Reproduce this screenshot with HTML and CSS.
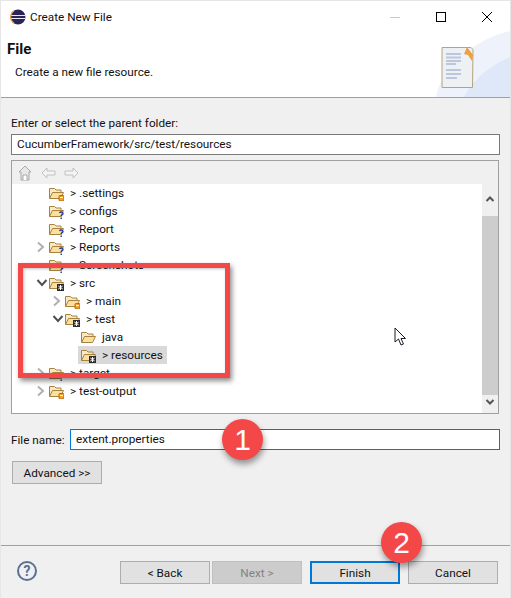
FILE: index.html
```html
<!DOCTYPE html>
<html lang="en">
<head>
  <meta charset="UTF-8" />
  <title>Create New File</title>
  <link rel="stylesheet" href="styles.css">
</head>
<body>

  <!-- icon set -->
  <svg class="defs" width="0" height="0">
    <symbol id="folder" viewBox="0 0 16 16">
      <path d="M1.500 13.500V3.500h5l1.500 1.500h5v2.500" fill="#f8e8c4" stroke="#a8833f"/>
      <path d="M1.500 13.500L4.500 7.500H15.500L12.500 13.500Z" fill="#fbdf9f" stroke="#a8833f"/>
    </symbol>
    <symbol id="mark-lock" viewBox="0 0 16 16">
      <rect x="11" y="10.500" width="5" height="5.500" rx="1" fill="#f0a030" stroke="#b06a10"/>
      <path d="M12 12.500h3" stroke="#fff"/>
    </symbol>
    <symbol id="mark-help" viewBox="0 0 16 16">
      <path d="M11.500 10c.8-1.500 3.500-1.200 3.500.4 0 1.400-1.800 1.400-1.800 3M13.200 14.500v1.500" fill="none" stroke="#2a3a9a" stroke-width="1.400"/>
    </symbol>
    <symbol id="mark-pkg" viewBox="0 0 16 16">
      <rect x="9" y="9" width="7" height="7" fill="#2b2b2b"/>
      <path d="M12.500 10v5M10.300 11l4.400 3M14.700 11l-4.400 3" stroke="#fff"/>
    </symbol>
    <symbol id="chev-right" viewBox="0 0 10 12">
      <path d="M2 1.500L7 6L2 10.500" fill="none" stroke="#b0b0b0" stroke-width="2"/>
    </symbol>
    <symbol id="chev-down" viewBox="0 0 12 10">
      <path d="M1.500 2L6 7L10.500 2" fill="none" stroke="#505050" stroke-width="2"/>
    </symbol>
  </svg>

  <div class="dialog">

    <!-- title bar -->
    <div class="titlebar">
      <svg class="app-icon" width="16" height="16" viewBox="0 0 16 16">
        <circle cx="8" cy="8" r="7.500" fill="#2c2456"/>
        <path d="M1 6.500h14M.8 9.500h14.400" stroke="#e8e8f0" stroke-width="1.200"/>
        <path d="M4 1.800A7.500 7.500 0 0 0 4 14.200" fill="none" stroke="#f09a30" stroke-width="1.200"/>
      </svg>
      <span class="title-text">Create New File</span>
      <div class="win-btns">
        <span class="win-btn"><svg width="12" height="12" viewBox="0 0 12 12"><path d="M1 6.500h10" stroke="#c8c8c8"/></svg></span>
        <span class="win-btn"><svg width="12" height="12" viewBox="0 0 12 12"><rect x="1.500" y="1.500" width="9" height="9" fill="none" stroke="#000"/></svg></span>
        <span class="win-btn"><svg width="12" height="12" viewBox="0 0 12 12"><path d="M1 1l10 10M11 1L1 11" stroke="#000"/></svg></span>
      </div>
    </div>

    <!-- banner -->
    <div class="banner">
      <div class="banner-text">
        <div class="banner-title">File</div>
        <div class="banner-desc">Create a new file resource.</div>
      </div>
      <svg class="banner-art" width="76" height="66" viewBox="0 0 76 66">
        <path d="M2 66C8 34 42 8 76 0V66Z" fill="#eef2fb"/>
        <path d="M30 66C40 46 58 34 76 26V66Z" fill="#dfe8f9"/>
        <path d="M8 16.500H37L39 18.500L38.500 56.500H8Z" fill="#edf1f4" stroke="#b5a47e"/>
        <path d="M33 16L39 24L38 30L34 24L30 23Z" fill="#ee9f3e"/>
        <path d="M12 23h15M12 26.500h15M12 30h15M12 33h10M12 39h15M12 43h15M12 47h11" stroke="#bcc7dd" stroke-width="2"/>
      </svg>
    </div>

    <div class="main">
      <div class="label">Enter or select the parent folder:</div>
      <div class="field">CucumberFramework/src/test/resources</div>

      <!-- tree -->
      <div class="tree-box">
        <div class="tree-tools">
          <svg width="14" height="16" viewBox="0 0 14 16">
            <path d="M7 1L1 7h2v8h8V7h2Z" fill="#e8e8e8" stroke="#a8a8a8"/>
            <path d="M5 15v-5h4v5" fill="#fff" stroke="#a8a8a8"/>
          </svg>
          <svg class="tool-back" width="15" height="12" viewBox="0 0 15 12">
            <path d="M1 6l5-5v3h8v4H6v3Z" fill="#f4f4f4" stroke="#c0c0c0"/>
          </svg>
          <svg class="tool-fwd" width="15" height="12" viewBox="0 0 15 12">
            <path d="M14 6L9 1v3H1v4h8v3Z" fill="#f4f4f4" stroke="#c0c0c0"/>
          </svg>
        </div>
        <div class="tree-body">
          <div class="tree">
            <div class="row depth-0"><span class="twist"></span><svg class="ico"><use href="#folder"/><use href="#mark-lock"/></svg><span class="name">&gt; .settings</span></div>
            <div class="row depth-0"><span class="twist"></span><svg class="ico"><use href="#folder"/><use href="#mark-help"/></svg><span class="name">&gt; configs</span></div>
            <div class="row depth-0"><span class="twist"></span><svg class="ico"><use href="#folder"/><use href="#mark-help"/></svg><span class="name">&gt; Report</span></div>
            <div class="row depth-0"><span class="twist"><svg width="10" height="12"><use href="#chev-right"/></svg></span><svg class="ico"><use href="#folder"/><use href="#mark-help"/></svg><span class="name">&gt; Reports</span></div>
            <div class="row depth-0"><span class="twist"></span><svg class="ico"><use href="#folder"/><use href="#mark-help"/></svg><span class="name">&gt; Screenshots</span></div>
            <div class="row depth-0"><span class="twist"><svg width="12" height="10"><use href="#chev-down"/></svg></span><svg class="ico"><use href="#folder"/><use href="#mark-pkg"/></svg><span class="name">&gt; src</span></div>
            <div class="row depth-1"><span class="twist"><svg width="10" height="12"><use href="#chev-right"/></svg></span><svg class="ico"><use href="#folder"/><use href="#mark-lock"/></svg><span class="name">&gt; main</span></div>
            <div class="row depth-1"><span class="twist"><svg width="12" height="10"><use href="#chev-down"/></svg></span><svg class="ico"><use href="#folder"/><use href="#mark-pkg"/></svg><span class="name">&gt; test</span></div>
            <div class="row depth-2"><span class="twist"></span><svg class="ico"><use href="#folder"/></svg><span class="name">java</span></div>
            <div class="row depth-2"><span class="twist"></span><span class="selected"><svg class="ico"><use href="#folder"/><use href="#mark-pkg"/></svg><span class="name">&gt; resources</span></span></div>
            <div class="row depth-0"><span class="twist"><svg width="10" height="12"><use href="#chev-right"/></svg></span><svg class="ico"><use href="#folder"/><use href="#mark-help"/></svg><span class="name">&gt; target</span></div>
            <div class="row depth-0"><span class="twist"><svg width="10" height="12"><use href="#chev-right"/></svg></span><svg class="ico"><use href="#folder"/><use href="#mark-lock"/></svg><span class="name">&gt; test-output</span></div>
          </div>
          <div class="scrollbar">
            <svg class="arrow" width="16" height="32" viewBox="0 0 16 32"><path d="M4.500 17L8 13.500L11.500 17" fill="none" stroke="#555" stroke-width="2"/></svg>
            <div class="thumb"></div>
            <svg class="arrow" width="16" height="18" viewBox="0 0 16 18"><path d="M4.500 5L8 8.500L11.500 5" fill="none" stroke="#555" stroke-width="2"/></svg>
          </div>
        </div>
      </div>

      <div class="file-row">
        <span class="file-label">File name:</span>
        <div class="field field-active">extent.properties</div>
      </div>

      <button class="btn btn-advanced">Advanced &gt;&gt;</button>
    </div>

    <!-- footer -->
    <div class="footer">
      <span class="help">?</span>
      <div class="footer-btns">
        <button class="btn">&lt; Back</button>
        <button class="btn btn-disabled">Next &gt;</button>
        <button class="btn btn-default">Finish</button>
        <button class="btn">Cancel</button>
      </div>
    </div>

    <!-- annotations on top of the screenshot -->
    <div class="callout-box"></div>
    <div class="badge badge-1">1</div>
    <div class="badge badge-2">2</div>
    <svg class="pointer" width="13" height="19" viewBox="0 0 13 19">
      <path d="M1 1V15L4.500 12L7 18L9.500 17L7 11.500H11.500Z" fill="#fff" stroke="#1a1a2a"/>
    </svg>
  </div>

</body>
</html>
```

FILE: styles.css
```css
* {
  box-sizing: border-box;
}

body {
  margin: 0;
  background: #e6e6e6;
  font-family: Roboto, "Noto Sans", sans-serif;
  font-size: 11.75px;
  color: #111;
}

.defs {
  display: block;
  height: 0;
}

.dialog {
  position: relative;
  width: 509px;
  height: 597px;
  margin: 1px 0 0 1px;
  background: #f0f0f0;
  overflow: hidden;
}

.titlebar {
  height: 31px;
  display: flex;
  align-items: center;
  padding-left: 9px;
  background: #fff;
}

.app-icon {
  margin-right: 4px;
}

.title-text {
  flex: 1;
}

.win-btns {
  display: flex;
}

.win-btn {
  width: 46px;
  height: 29px;
  display: flex;
  align-items: center;
  justify-content: center;
}

.banner {
  height: 66px;
  display: flex;
  justify-content: space-between;
  background: #fff;
  border-bottom: 1px solid #a0a0a0;
}

.banner-title {
  margin: 8px 0 0 6px;
  font-size: 15px;
  font-weight: 700;
}

.banner-desc {
  margin: 7px 0 0 14px;
}

.banner-art {
  align-self: flex-end;
}

.main {
  padding: 16px 10px 0 10px;
}

.label {
  height: 20px;
  line-height: 18px;
}

.field {
  height: 21px;
  line-height: 19px;
  padding-left: 5px;
  background: #fff;
  border: 1px solid #7a7a7a;
}

.tree-box {
  display: flex;
  flex-direction: column;
  width: 488px;
  height: 254px;
  margin-top: 5px;
  border: 1px solid #a0a0a0;
  background: #fff;
}

.tree-tools {
  height: 23px;
  display: flex;
  align-items: center;
  padding-left: 6px;
  background: #f0f0f0;
}

.tool-back {
  margin-left: 9px;
}

.tool-fwd {
  margin-left: 8px;
}

.tree-body {
  flex: 1;
  display: flex;
}

.tree {
  flex: 1;
}

.row {
  height: 18px;
  display: flex;
  align-items: center;
}

.depth-0 {
  padding-left: 24px;
}

.depth-1 {
  padding-left: 40px;
}

.depth-2 {
  padding-left: 56px;
}

.twist {
  width: 13px;
  display: flex;
}

.ico {
  width: 16px;
  height: 16px;
  flex: none;
  margin-left: -1px;
}

.name {
  margin-left: 6px;
}

.selected {
  height: 18px;
  display: flex;
  align-items: center;
  margin-left: -3px;
  padding: 0 4px 0 3px;
  background: #d9d9d9;
}

.scrollbar {
  width: 16px;
  display: flex;
  flex-direction: column;
  background: #f0f0f0;
}

.thumb {
  flex: 1;
  background: #cdcdcd;
}

.file-row {
  display: flex;
  align-items: center;
  margin-top: 15px;
}

.file-label {
  width: 59px;
}

.file-row .field {
  flex: 1;
}

.field-active {
  border-color: #0078d7;
}

.btn {
  width: 90px;
  height: 23px;
  padding: 0;
  font-family: inherit;
  font-size: 11.75px;
  color: #111;
  background: #e1e1e1;
  border: 1px solid #adadad;
}

.btn-advanced {
  display: block;
  margin: 11px 0 0 1px;
}

.btn-disabled {
  color: #838383;
  background: #cccccc;
  border-color: #bfbfbf;
}

.btn-default {
  margin-left: 6px;
  border: 2px solid #0078d7;
}

.footer {
  position: absolute;
  left: 0;
  right: 0;
  top: 544px;
  height: 53px;
  display: flex;
  padding: 15px 12px 0 16px;
  border-top: 1px solid #a0a0a0;
}

.help {
  width: 20px;
  height: 20px;
  border: 2px solid #5b7194;
  border-radius: 50%;
  font-size: 14px;
  font-weight: 700;
  line-height: 16px;
  text-align: center;
  color: #5b7194;
}

.footer-btns {
  display: flex;
  gap: 2px;
  margin-left: auto;
}

.footer-btns .btn:last-child {
  margin-left: 6px;
}

.callout-box {
  position: absolute;
  left: 17px;
  top: 262px;
  width: 212px;
  height: 115px;
  border: 5px solid #f44848;
  box-shadow: 2px 3px 5px rgba(0, 0, 0, 0.45), inset 1px 1px 3px rgba(0, 0, 0, 0.25);
}

.badge {
  position: absolute;
  width: 41px;
  height: 41px;
  border-radius: 50%;
  background: #f44848;
  box-shadow: 1px 4px 6px rgba(0, 0, 0, 0.4);
  color: #fff;
  font-family: "Liberation Sans", sans-serif;
  font-size: 30px;
  line-height: 41px;
  text-align: center;
}

.badge-1 {
  left: 221px;
  top: 418px;
}

.badge-2 {
  left: 380px;
  top: 521px;
}

.pointer {
  position: absolute;
  left: 393px;
  top: 326px;
}
```
